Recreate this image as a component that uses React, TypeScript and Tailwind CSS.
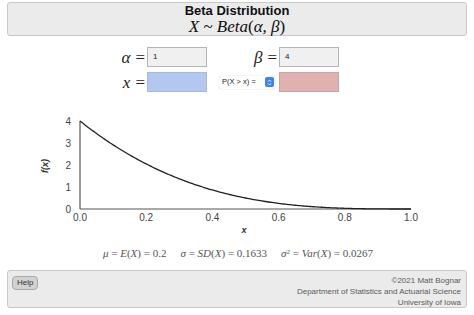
const sans = { fontFamily: '"Liberation Sans", Arial, sans-serif' };

function pdf(x: number) {
  return 4 * Math.pow(1 - x, 3);
}

function Chart() {
  const x0 = 80;
  const x1 = 411;
  const y0 = 208;
  const sy = 22;
  const pts: string[] = [];
  for (let i = 0; i <= 200; i++) {
    const x = i / 200;
    pts.push(`${(x0 + x * (x1 - x0)).toFixed(2)},${(y0 - pdf(x) * sy).toFixed(2)}`);
  }
  const xt = [0, 0.2, 0.4, 0.6, 0.8, 1.0];
  const yt = [0, 1, 2, 3, 4];
  return (
    <svg width="474" height="140" viewBox="0 100 474 140" className="block" style={sans}>
      <line x1={x0} y1={120} x2={x0} y2={y0} stroke="#555" strokeWidth="1.2" />
      <line x1={x0} y1={y0} x2={x1} y2={y0} stroke="#555" strokeWidth="1.2" />
      <polyline points={pts.join(" ")} fill="none" stroke="#222" strokeWidth="1.3" />
      {yt.map((v) => (
        <text key={v} x={71} y={y0 - v * sy + 3.5} fontSize="10" fill="#444" textAnchor="end">
          {v}
        </text>
      ))}
      {xt.map((v) => (
        <text key={v} x={x0 + v * (x1 - x0)} y={220} fontSize="10" fill="#444" textAnchor="middle">
          {v.toFixed(1)}
        </text>
      ))}
      <text x={244} y={232} fontSize="9" fill="#333" fontStyle="italic" fontWeight="bold" textAnchor="middle">
        x
      </text>
      <text
        x={48}
        y={165}
        fontSize="9"
        fill="#333"
        fontStyle="italic"
        fontWeight="bold"
        textAnchor="middle"
        transform="rotate(-90 48 165)"
      >
        f(x)
      </text>
    </svg>
  );
}

function MathLabel({ sym }: { sym: string }) {
  return (
    <span
      className="flex items-center gap-[5px] text-[17px] leading-none text-[#222]"
      style={{ fontFamily: '"Liberation Serif", "Times New Roman", serif' }}
    >
      <i>{sym}</i>
      <span>=</span>
    </span>
  );
}

export default function App() {
  const serif = { fontFamily: '"Liberation Serif", "Times New Roman", serif' };
  return (
    <div className="w-[474px] h-[315px] bg-white overflow-hidden relative" style={sans}>
      {/* Header */}
      <div className="mx-[7px] mt-[2px] h-[34px] rounded-[3px] border border-[#c9c9c9] bg-[#ebebeb] flex flex-col items-center justify-center">
        <div className="text-[13px] font-bold leading-[14px] text-[#111]">Beta Distribution</div>
        <div className="text-[17px] italic leading-[17px] text-[#111]" style={serif}>
          X <span className="not-italic">~</span> Beta<span className="not-italic">(</span>α, β<span className="not-italic">)</span>
        </div>
      </div>

      {/* Inputs */}
      <div className="mt-[11px] flex flex-col gap-[5px]">
        <div className="flex items-center h-[20px]">
          <div className="w-[147px] flex justify-end pr-[2px]">
            <MathLabel sym="α" />
          </div>
          <div className="w-[60px] h-[20px] border border-[#b5b5b5] bg-[#f0f0f0] text-[8px] pl-[5px] flex items-center text-[#222]">1</div>
          <div className="w-[72px] flex justify-end pr-[2px]">
            <MathLabel sym="β" />
          </div>
          <div className="w-[60px] h-[20px] border border-[#b5b5b5] bg-[#f0f0f0] text-[8px] pl-[5px] flex items-center text-[#222]">4</div>
        </div>
        <div className="flex items-center h-[20px]">
          <div className="w-[147px] flex justify-end pr-[2px]">
            <MathLabel sym="x" />
          </div>
          <div className="w-[60px] h-[20px] border border-[#a9b9d6] bg-[#b3c8f1]" />
          <div className="w-[72px] flex justify-end pr-[4px]">
            <div className="h-[13px] w-[56px] rounded-[3px] bg-white shadow-[0_0_1px_rgba(0,0,0,0.35)] flex items-center justify-between pl-[3px] pr-[1px] text-[7.5px] text-[#222]">
              <span>P(X &gt; x) =</span>
              <span className="w-[9px] h-[10px] rounded-[2px] bg-[#3b82f6] flex items-center justify-center">
                <svg width="5" height="7" viewBox="0 0 5 7">
                  <path d="M1 2.6 L2.5 1 L4 2.6 M1 4.4 L2.5 6 L4 4.4" stroke="white" strokeWidth="0.9" fill="none" />
                </svg>
              </span>
            </div>
          </div>
          <div className="w-[60px] h-[20px] border border-[#c9a4a4] bg-[#e1b0b1]" />
        </div>
      </div>

      {/* Chart */}
      <div className="mt-[9px]">
        <Chart />
      </div>

      {/* Stats */}
      <div className="mt-[6px] flex justify-center gap-[14px] text-[11px] leading-[12px] text-[#555] pl-[2px]" style={serif}>
        <span>
          <i>μ</i> = <i>E</i>(<i>X</i>) = 0.2
        </span>
        <span>
          <i>σ</i> = <i>SD</i>(<i>X</i>) = 0.1633
        </span>
        <span>
          <i>σ</i>
          <sup className="text-[7px]">2</sup> = <i>Var</i>(<i>X</i>) = 0.0267
        </span>
      </div>

      {/* Footer */}
      <div className="absolute left-[7px] right-[7px] top-[270px] h-[38px] rounded-[3px] border border-[#c9c9c9] bg-[#ebebeb] flex justify-between px-[4px] pt-[5px]">
        <button className="h-[14px] px-[4px] rounded-[4px] border border-[#a9a9a9] bg-[#d2d2d2] text-[8px] text-[#333] leading-none">
          Help
        </button>
        <div className="text-right text-[8px] leading-[11px] text-[#5a5a5a] pr-[1px] -mt-[1px]">
          <div>©2021 Matt Bognar</div>
          <div>Department of Statistics and Actuarial Science</div>
          <div>University of Iowa</div>
        </div>
      </div>
    </div>
  );
}
